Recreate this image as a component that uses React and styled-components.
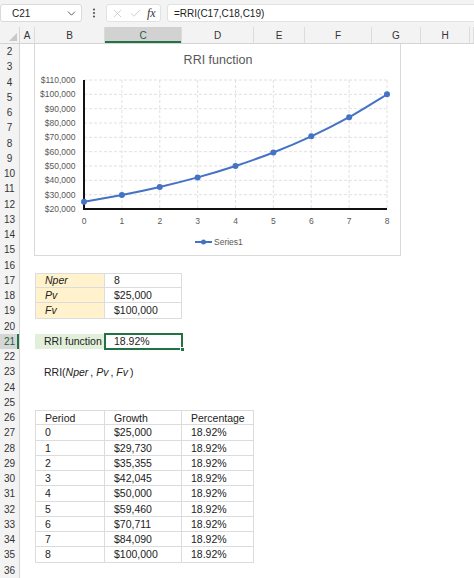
import React from "react";
import styled, { createGlobalStyle } from "styled-components";
import { ChevronDown, EllipsisVertical, X, Check } from "lucide-react";

const GlobalStyle = createGlobalStyle`
  html, body {
    margin: 0;
    padding: 0;
    background: #ffffff;
    font-family: "Liberation Sans", Arial, sans-serif;
    color: #222;
  }
`;

const COLS = [
  { id: "A", w: 15 },
  { id: "B", w: 70 },
  { id: "C", w: 77 },
  { id: "D", w: 72 },
  { id: "E", w: 51 },
  { id: "F", w: 67 },
  { id: "G", w: 49 },
  { id: "H", w: 49 },
];
const TEMPLATE = `20px ${COLS.map((c) => c.w + "px").join(" ")} 1fr`;
const ROW_H = 15.25;
const ROWS = Array.from({ length: 35 }, (_, i) => i + 2);

const Page = styled.div`
  width: 474px;
  height: 578px;
  overflow: hidden;
  background: #fff;
`;

const FormulaBar = styled.div`
  height: 27px;
  box-sizing: border-box;
  display: flex;
  align-items: center;
  gap: 6px;
  padding: 0 0 1px 0;
  background: #f3f3f3;
  font-size: 10px;
`;

const NameBox = styled.div`
  width: 82px;
  height: 18px;
  box-sizing: border-box;
  background: #fff;
  border: 1px solid #dadada;
  border-radius: 3px;
  display: flex;
  align-items: center;
  justify-content: space-between;
  padding: 0 3px 0 11px;
  color: #222;
`;

const Dots = styled.div`
  width: 12px;
  display: flex;
  justify-content: center;
  color: #555;
`;

const IconGroup = styled.div`
  width: 55px;
  height: 18px;
  box-sizing: border-box;
  background: #fff;
  border: 1px solid #e2e2e2;
  border-radius: 3px;
  display: flex;
  align-items: center;
  justify-content: space-around;
  padding: 0 2px;
  color: #bdbdbd;
`;

const Fx = styled.span`
  font-family: "Liberation Serif", "Times New Roman", serif;
  font-style: italic;
  font-size: 12px;
  color: #333;
`;

const FormulaInput = styled.div`
  flex: 1;
  height: 18px;
  box-sizing: border-box;
  background: #fff;
  border: 1px solid #e2e2e2;
  border-right: none;
  border-radius: 3px 0 0 3px;
  display: flex;
  align-items: center;
  padding-left: 6px;
  color: #222;
`;

const HeaderRow = styled.div`
  display: grid;
  grid-template-columns: ${TEMPLATE};
  height: 17px;
  background: #f3f3f3;
  border-bottom: 1px solid #d4d4d4;
  box-sizing: border-box;
`;

const Corner = styled.div`
  position: relative;
  border-right: 1px solid #d4d4d4;
  &::after {
    content: "";
    position: absolute;
    right: 2px;
    bottom: 2px;
    border-style: solid;
    border-width: 0 0 8px 8px;
    border-color: transparent transparent #c8c8c8 transparent;
  }
`;

const ColHead = styled.div`
  display: flex;
  align-items: center;
  justify-content: center;
  font-size: 10px;
  color: ${(p) => (p.$active ? "#1e5e3a" : "#333")};
  background: ${(p) => (p.$active ? "#d2d2d2" : "transparent")};
  border-right: 1px solid #dcdcdc;
  box-shadow: ${(p) => (p.$active ? "inset 0 -2px 0 #217346" : "none")};
`;

const Body = styled.div`
  position: relative;
  overflow: hidden;
  display: grid;
  grid-template-columns: ${TEMPLATE};
  grid-auto-rows: ${ROW_H}px;
  height: 534px;
`;

const RowHead = styled.div`
  display: flex;
  align-items: center;
  justify-content: center;
  font-size: 10px;
  color: ${(p) => (p.$active ? "#1e5e3a" : "#333")};
  background: ${(p) => (p.$active ? "#d6d6d6" : "#f3f3f3")};
  border-right: 1px solid #d4d4d4;
  box-shadow: ${(p) => (p.$active ? "inset -2px 0 0 #217346" : "none")};
`;

const Cell = styled.div`
  position: relative;
  box-sizing: border-box;
  display: flex;
  align-items: center;
  padding-left: 9px;
  font-size: 10.5px;
  white-space: nowrap;
  overflow: visible;
  background: ${(p) => p.$fill || "transparent"};
  font-style: ${(p) => (p.$italic ? "italic" : "normal")};
  border-right: ${(p) => (p.$boxed ? "1px solid #dcdcdc" : "none")};
  border-bottom: ${(p) => (p.$boxed ? "1px solid #dcdcdc" : "none")};
  border-top: ${(p) => (p.$top ? "1px solid #dcdcdc" : "none")};
  border-left: ${(p) => (p.$left ? "1px solid #dcdcdc" : "none")};
  ${(p) =>
    p.$selected &&
    `
    outline: 2px solid #217346;
    outline-offset: -1px;
    z-index: 1;
    &::after {
      content: "";
      position: absolute;
      right: -3px;
      bottom: -3px;
      width: 5px;
      height: 5px;
      background: #217346;
      border: 1px solid #fff;
      box-sizing: border-box;
    }
  `}
`;

const Arg = styled.i`
  margin-right: 2px;
`;

const ChartBox = styled.div`
  position: absolute;
  left: 34px;
  top: -6px;
  width: 365px;
  height: 216px;
  border: 1px solid #d9d9d9;
  background: #fff;
  z-index: 2;
  svg {
    display: block;
  }
`;

const YELLOW = "#fff2cc";
const GREEN = "#e2efda";

const inputs = [
  ["Nper", "8"],
  ["Pv", "$25,000"],
  ["Fv", "$100,000"],
];
const growth = [
  "$25,000",
  "$29,730",
  "$35,355",
  "$42,045",
  "$50,000",
  "$59,460",
  "$70,711",
  "$84,090",
  "$100,000",
];

const cells = {};
inputs.forEach(([label, value], i) => {
  const r = 17 + i;
  cells["B" + r] = { text: label, italic: true, fill: YELLOW, boxed: true, left: true, top: i === 0 };
  cells["C" + r] = { text: value, boxed: true, top: i === 0 };
});
cells.B21 = { text: "RRI function", fill: GREEN };
cells.C21 = { text: "18.92%", selected: true };
cells.B23 = {
  text: (
    <span>
      RRI(<Arg>Nper</Arg>, <Arg>Pv</Arg>, <Arg>Fv</Arg>)
    </span>
  ),
};
const tableRows = [["Period", "Growth", "Percentage"]].concat(
  growth.map((g, i) => [String(i), g, "18.92%"])
);
tableRows.forEach((row, i) => {
  const r = 26 + i;
  ["B", "C", "D"].forEach((c, j) => {
    cells[c + r] = { text: row[j], boxed: true, left: j === 0, top: i === 0 };
  });
});

// chart geometry in page coordinates
const X0 = 84;
const XSTEP = 37.875;
const YBASE = 209;
const YSTEP = 14.33;
const values = [25000, 29730, 35355, 42045, 50000, 59460, 70711, 84090, 100000];
const pts = values.map((v, i) => [X0 + i * XSTEP, YBASE - ((v - 20000) / 10000) * YSTEP]);

function smoothPath(p) {
  let d = `M${p[0][0]},${p[0][1]}`;
  for (let i = 0; i < p.length - 1; i++) {
    const p0 = p[i - 1] || p[i];
    const p1 = p[i];
    const p2 = p[i + 1];
    const p3 = p[i + 2] || p2;
    const c1 = [p1[0] + (p2[0] - p0[0]) / 6, p1[1] + (p2[1] - p0[1]) / 6];
    const c2 = [p2[0] - (p3[0] - p1[0]) / 6, p2[1] - (p3[1] - p1[1]) / 6];
    d += ` C${c1[0]},${c1[1]} ${c2[0]},${c2[1]} ${p2[0]},${p2[1]}`;
  }
  return d;
}

function Chart() {
  const labelColor = "#595959";
  return (
    <ChartBox>
      <svg width="365" height="216" viewBox="35 39 365 216" fontFamily="Liberation Sans, Arial, sans-serif">
        <text x="218" y="63.5" textAnchor="middle" fontSize="12.5" fill={labelColor}>
          RRI function
        </text>
        {Array.from({ length: 9 }, (_, k) => {
          const y = YBASE - (k + 1) * YSTEP;
          return (
            <line key={"h" + k} x1={X0} x2={X0 + 8 * XSTEP} y1={y} y2={y} stroke="#d9d9d9" strokeWidth="0.8" strokeDasharray="3 2" />
          );
        })}
        {Array.from({ length: 8 }, (_, i) => {
          const x = X0 + (i + 1) * XSTEP;
          return (
            <line key={"v" + i} x1={x} x2={x} y1={YBASE - 9 * YSTEP} y2={YBASE} stroke="#d9d9d9" strokeWidth="0.8" strokeDasharray="3 2" />
          );
        })}
        <line x1={X0} x2={X0} y1={YBASE - 9 * YSTEP} y2={YBASE + 1} stroke="#111" strokeWidth="2" />
        <line x1={X0 - 1} x2={X0 + 8 * XSTEP} y1={YBASE} y2={YBASE} stroke="#111" strokeWidth="2" />
        {Array.from({ length: 10 }, (_, k) => (
          <text key={"yl" + k} x="75.5" y={YBASE - k * YSTEP + 3} textAnchor="end" fontSize="8.5" fill={labelColor}>
            {"$" + (20 + k * 10) + ",000"}
          </text>
        ))}
        {Array.from({ length: 9 }, (_, i) => (
          <text key={"xl" + i} x={X0 + i * XSTEP} y="224" textAnchor="middle" fontSize="8.5" fill={labelColor}>
            {i}
          </text>
        ))}
        <path d={smoothPath(pts)} fill="none" stroke="#4472c4" strokeWidth="2" />
        {pts.map(([x, y], i) => (
          <circle key={"m" + i} cx={x} cy={y} r="3" fill="#4472c4" />
        ))}
        <line x1="195" x2="212" y1="242" y2="242" stroke="#4472c4" strokeWidth="2" />
        <circle cx="203.5" cy="242" r="2.5" fill="#4472c4" />
        <text x="214" y="245" fontSize="8.5" fill={labelColor}>
          Series1
        </text>
      </svg>
    </ChartBox>
  );
}

export default function App() {
  return (
    <Page>
      <GlobalStyle />
      <FormulaBar>
        <NameBox>
          <span>C21</span>
          <ChevronDown size={13} color="#444" strokeWidth={1.6} />
        </NameBox>
        <Dots>
          <EllipsisVertical size={12} strokeWidth={2.4} />
        </Dots>
        <IconGroup>
          <X size={13} strokeWidth={1.3} />
          <Check size={13} strokeWidth={1.3} />
          <Fx>fx</Fx>
        </IconGroup>
        <FormulaInput>=RRI(C17,C18,C19)</FormulaInput>
      </FormulaBar>
      <HeaderRow>
        <Corner />
        {COLS.map((c) => (
          <ColHead key={c.id} $active={c.id === "C"}>
            {c.id}
          </ColHead>
        ))}
        <ColHead />
      </HeaderRow>
      <Body>
        <Chart />
        {ROWS.map((r) => (
          <React.Fragment key={r}>
            <RowHead $active={r === 21}>{r}</RowHead>
            {COLS.map((c) => {
              const cell = cells[c.id + r];
              if (!cell) return <Cell key={c.id} />;
              return (
                <Cell
                  key={c.id}
                  $fill={cell.fill}
                  $italic={cell.italic}
                  $boxed={cell.boxed}
                  $top={cell.top}
                  $left={cell.left}
                  $selected={cell.selected}
                >
                  {cell.text}
                </Cell>
              );
            })}
            <Cell />
          </React.Fragment>
        ))}
      </Body>
    </Page>
  );
}
